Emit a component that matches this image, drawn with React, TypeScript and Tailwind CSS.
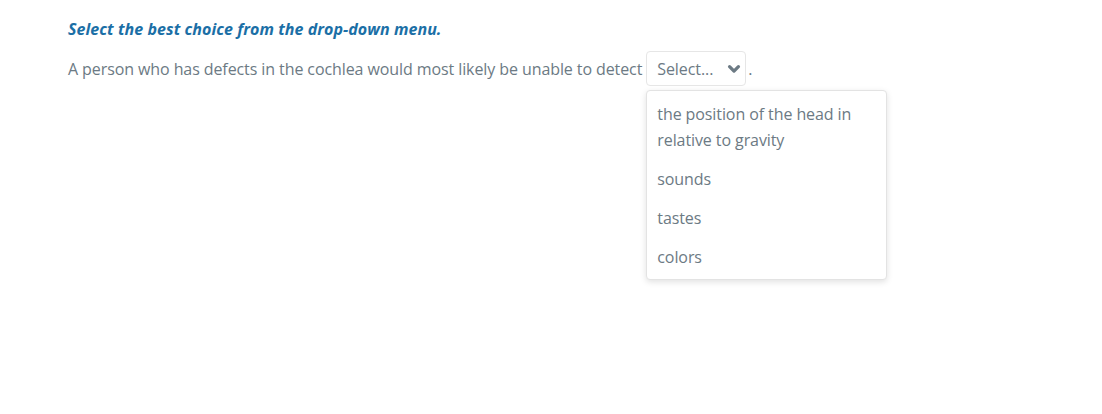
import React from "react";

export default function App() {
  const options = [
    "the position of the head in relative to gravity",
    "sounds",
    "tastes",
    "colors",
  ];
  return (
    <div
      className="w-[1102px] h-[414px] bg-white pl-[68px] pt-[16px]"
      style={{ fontFamily: '"Open Sans", sans-serif' }}
    >
      <div className="text-[16px] leading-[26px] font-bold italic text-[#1b6fa6] tracking-[0.06px]">
        Select the best choice from the drop-down menu.
      </div>
      <div className="mt-[9px] flex items-center text-[16px] leading-[26px] text-[#6c7a84] tracking-[-0.09px]">
        <span>A person who has defects in the cochlea would most likely be unable to detect</span>
        <div className="relative ml-[4px]">
          <div className="flex items-center w-[100px] h-[35px] border border-[#e6e6e6] rounded-[4px] pl-[10px] pr-[4px] justify-between">
            <span>Select...</span>
            <svg width="14" height="14" viewBox="0 0 12 12" className="mt-[1px]">
              <path d="M2.2 4 L6 7.8 L9.8 4" stroke="#6c7a84" strokeWidth="2.8" fill="none" strokeLinecap="round" strokeLinejoin="round" />
            </svg>
          </div>
          <div className="absolute left-0 top-[39px] w-[241px] bg-white border border-[#e3e3e3] rounded-[4px] py-[3px] shadow-[0_2px_6px_rgba(0,0,0,0.12)]">
            {options.map((o) => (
              <div key={o} className="px-[10px] py-[6.5px] leading-[26px]">
                {o}
              </div>
            ))}
          </div>
        </div>
        <span className="ml-[2px]">.</span>
      </div>
    </div>
  );
}
